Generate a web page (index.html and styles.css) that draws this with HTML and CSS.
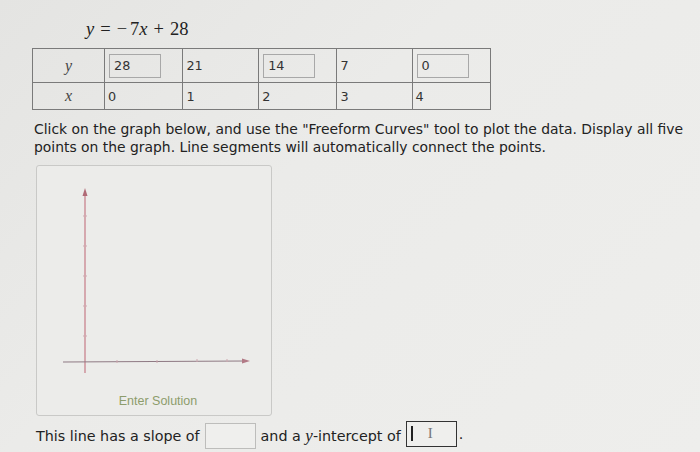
FILE: index.html
```html
<!DOCTYPE html>
<html>
<head>
<meta charset="utf-8">
<link rel="stylesheet" href="styles.css">
</head>
<body>
<div class="page">
  <div class="eq"><i>y</i><span class="op">=</span>−<span class="sp"></span>7<i>x</i><span class="op">+</span>28</div>
  <table class="tbl">
    <tr class="r1">
      <td class="lab"><i>y</i></td>
      <td><span class="box">28</span></td>
      <td>21</td>
      <td><span class="box">14</span></td>
      <td>7</td>
      <td><span class="box">0</span></td>
    </tr>
    <tr class="r2">
      <td class="lab"><i>x</i></td>
      <td>0</td>
      <td>1</td>
      <td>2</td>
      <td>3</td>
      <td>4</td>
    </tr>
  </table>
  <p class="instr">Click on the graph below, and use the "Freeform Curves" tool to plot the data. Display all five points on the graph. Line segments will automatically connect the points.</p>
  <div class="graph">
    <svg class="axes" width="236" height="225" viewBox="0 0 236 225">
      <line x1="48" y1="26" x2="48" y2="207" stroke="#c9848e" stroke-width="1.3"/>
      <polygon points="48,22 45.5,30 50.5,30" fill="#b06a76"/>
      <line x1="26" y1="196" x2="208" y2="195" stroke="#8f7a84" stroke-width="1.2"/>
      <polygon points="213,195 205,192.5 205,197.5" fill="#b27a86"/>
      <g stroke="#cfa9b0" stroke-width="1">
        <line x1="46" y1="50" x2="50" y2="50"/>
        <line x1="46" y1="80" x2="50" y2="80"/>
        <line x1="46" y1="110" x2="50" y2="110"/>
        <line x1="46" y1="140" x2="50" y2="140"/>
        <line x1="46" y1="170" x2="50" y2="170"/>
        <line x1="80" y1="194" x2="80" y2="197"/>
        <line x1="120" y1="194" x2="120" y2="197"/>
        <line x1="160" y1="193" x2="160" y2="196"/>
        <line x1="190" y1="193" x2="190" y2="196"/>
      </g>
    </svg>
    <div class="enter">Enter Solution</div>
  </div>
  <div class="answer">
    <span>This line has a slope of</span>
    <span class="inp"></span>
    <span>and a <i class="mv">y</i>-intercept of</span>
    <span class="inp focus"><span class="caret"></span><span class="ibeam">I</span></span>
    <span class="dot">.</span>
  </div>
</div>
</body>
</html>
```
FILE: styles.css
```css
html, body {
  margin: 0;
  padding: 0;
  background: #ebebe9;
}
.page {
  width: 700px;
  height: 452px;
  overflow: hidden;
  font-family: "DejaVu Sans", Verdana, sans-serif;
  color: #222;
  background: linear-gradient(135deg, #e4e4e2 0%, #ebebe9 40%, #eeeeec 100%);
}
.eq {
  font-family: "Liberation Serif", "DejaVu Serif", serif;
  font-size: 18.5px;
  padding: 19px 0 0 86px;
  height: 24px;
  color: #222;
}
.eq .op {
  margin: 0 6px;
}
.eq .sp {
  display: inline-block;
  width: 3px;
}
.tbl {
  margin: 5px 0 0 32px;
  border-collapse: collapse;
  width: 459px;
  font-size: 12.8px;
  color: #333;
}
.tbl td {
  border: 1px solid #7a7a7a;
  width: 76px;
  padding: 0 0 0 3px;
  text-align: left;
  vertical-align: middle;
}
.tbl td.lab {
  text-align: center;
  padding: 0;
  font-family: "Liberation Serif", "DejaVu Serif", serif;
  font-size: 16px;
  color: #444;
}
.tbl .r1 td { height: 33px; }
.tbl .r2 td { height: 26px; }
.box {
  display: inline-block;
  width: 46px;
  height: 22px;
  line-height: 22px;
  border: 1px solid #a8a8a8;
  padding-left: 4px;
  margin-left: 1px;
}
.instr {
  margin: 10px 0 0 34px;
  width: 666px;
  font-size: 13.9px;
  line-height: 18px;
  color: #222;
}
.graph {
  margin: 9px 0 0 36px;
  width: 234px;
  height: 249px;
  border: 1px solid #c9c9c7;
  border-radius: 3px;
  background: #ececea;
  display: flex;
  flex-direction: column;
}
.axes {
  display: block;
}
.enter {
  font-family: "Liberation Sans", Arial, sans-serif;
  font-size: 12.5px;
  color: #8d9c6c;
  text-align: center;
  margin-left: 8px;
  margin-top: 3px;
}
.answer {
  display: flex;
  align-items: center;
  margin: 5px 0 0 36px;
  height: 30px;
  font-size: 14.3px;
  color: #222;
  gap: 5px;
}
.answer .mv {
  font-family: "Liberation Serif", "DejaVu Serif", serif;
  font-size: 17px;
}
.answer .dot {
  margin-left: -3px;
  margin-top: -4px;
}
.inp {
  display: inline-block;
  width: 49px;
  height: 24px;
  border: 1px solid #bdbdbb;
  background: #efefed;
}
.inp.focus {
  border: 1.5px solid #333;
  margin-top: -5px;
  display: flex;
  align-items: center;
}
.caret {
  width: 2px;
  height: 15px;
  background: #222;
  margin-left: 4px;
}
.ibeam {
  font-family: "Liberation Serif", serif;
  font-size: 15px;
  color: #777;
  margin-left: 15px;
}
```
